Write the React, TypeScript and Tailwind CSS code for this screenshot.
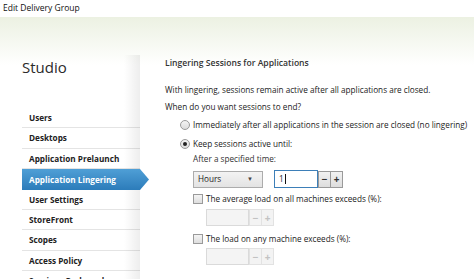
import React from 'react'

const navItems = [
  'Users',
  'Desktops',
  'Application Prelaunch',
  'Application Lingering',
  'User Settings',
  'StoreFront',
  'Scopes',
  'Access Policy',
  'Sessions Prelaunch',
]

function Radio({ checked }: { checked?: boolean }) {
  return (
    <span className="w-[10px] h-[10px] rounded-full border border-[#9a9a9a] bg-gradient-to-b from-[#f4f4f4] to-[#dcdcdc] flex items-center justify-center shrink-0">
      {checked && <span className="w-[4px] h-[4px] rounded-full bg-[#222]" />}
    </span>
  )
}

function Checkbox() {
  return (
    <span className="w-[10px] h-[10px] border border-[#9a9a9a] bg-gradient-to-b from-[#f4f4f4] to-[#dedede] shrink-0" />
  )
}

function Stepper({ disabled }: { disabled?: boolean }) {
  const btn = disabled
    ? 'w-[13px] h-[17px] border border-[#e2e2e2] bg-[#f3f3f3] text-[#c2c2c2] flex items-center justify-center text-[10px] font-bold leading-none'
    : 'w-[13px] h-[17px] border border-[#9a9a9a] bg-gradient-to-b from-[#f2f2f2] to-[#dddddd] text-[#333] flex items-center justify-center text-[10px] font-bold leading-none'
  return (
    <div className="flex">
      <span className={btn}>−</span>
      <span className={btn + ' -ml-px'}>+</span>
    </div>
  )
}

export default function App() {
  return (
    <div className="w-[474px] h-[279px] overflow-hidden bg-white font-['Open_Sans',sans-serif] text-[#1f1f1f] flex flex-col">
      <div className="h-[17px] shrink-0 pl-[3px] text-[8.5px] leading-[15px] text-[#111]">
        Edit Delivery Group
      </div>

      <div className="flex-1 flex bg-gradient-to-b from-[#ecf1e2] to-white to-[48px]">
        {/* sidebar */}
        <div className="relative w-[140px] shrink-0">
          <div className="absolute right-0 top-[38px] bottom-0 w-[16px] bg-gradient-to-r from-transparent to-[#00000012]" />
          <div className="pl-[22px] pt-[40px] h-[20px] box-content text-[15px] leading-[20px] text-[#2a2a2a]">
            Studio
          </div>
          <ul className="ml-[22px] mt-[31px]">
            {navItems.map((item) => {
              const active = item === 'Application Lingering'
              return active ? (
                <li
                  key={item}
                  className="relative z-10 w-[127px] h-[21px] pl-[7px] text-[8.2px] font-bold leading-[21px] text-white bg-gradient-to-b from-[#4f9fd6] to-[#2c7cba] [clip-path:polygon(0_0,118px_0,100%_50%,118px_100%,0_100%)]"
                >
                  {item}
                </li>
              ) : (
                <li
                  key={item}
                  className="w-[118px] h-[20.3px] pl-[7px] text-[8.2px] font-bold leading-[19px] text-[#222] border-b border-[#e4e4e4]"
                >
                  {item}
                </li>
              )
            })}
          </ul>
        </div>

        {/* content */}
        <div className="flex-1 pl-[25px] pt-[39px] text-[8.2px] text-[#222]">
          <div className="text-[8.6px] font-semibold leading-[14px] text-[#333]">
            Lingering Sessions for Applications
          </div>
          <div className="mt-[13px] leading-[14px]">
            With lingering, sessions remain active after all applications are closed.
          </div>
          <div className="mt-[3px] leading-[14px]">When do you want sessions to end?</div>

          <div className="mt-[4px] ml-[15px] h-[14px] flex items-center gap-[3px]">
            <Radio />
            <span>Immediately after all applications in the session are closed (no lingering)</span>
          </div>
          <div className="mt-[5px] ml-[15px] h-[14px] flex items-center gap-[3px]">
            <Radio checked />
            <span>Keep sessions active until:</span>
          </div>

          <div className="ml-[28px]">
            <div className="mt-[1px] leading-[14px] text-[#333]">After a specified time:</div>
            <div className="mt-[4px] flex items-center">
              <div className="w-[70px] h-[17px] border border-[#acacac] bg-gradient-to-b from-[#f3f3f3] to-[#e3e3e3] flex items-center justify-between pl-[4px] pr-[9px]">
                <span>Hours</span>
                <span className="text-[6px] text-[#444]">▼</span>
              </div>
              <div className="ml-[11px] w-[44px] h-[18px] border-[1.5px] border-[#3d7fb8] bg-white flex items-center pl-[4px]">
                <span>1</span>
                <span className="w-px h-[10px] bg-[#111] ml-px" />
              </div>
              <Stepper />
            </div>

            <div className="mt-[5px] h-[12px] flex items-center gap-[3px]">
              <Checkbox />
              <span>The average load on all machines exceeds (%):</span>
            </div>
            <div className="mt-[4px] ml-[13px] flex">
              <div className="w-[43px] h-[17px] border border-[#dadada] bg-[#f4f4f4]" />
              <Stepper disabled />
            </div>

            <div className="mt-[7px] h-[12px] flex items-center gap-[3px]">
              <Checkbox />
              <span>The load on any machine exceeds (%):</span>
            </div>
            <div className="mt-[3px] ml-[13px] flex">
              <div className="w-[43px] h-[17px] border border-[#dadada] bg-[#f4f4f4]" />
              <Stepper disabled />
            </div>
          </div>
        </div>
      </div>
    </div>
  )
}
